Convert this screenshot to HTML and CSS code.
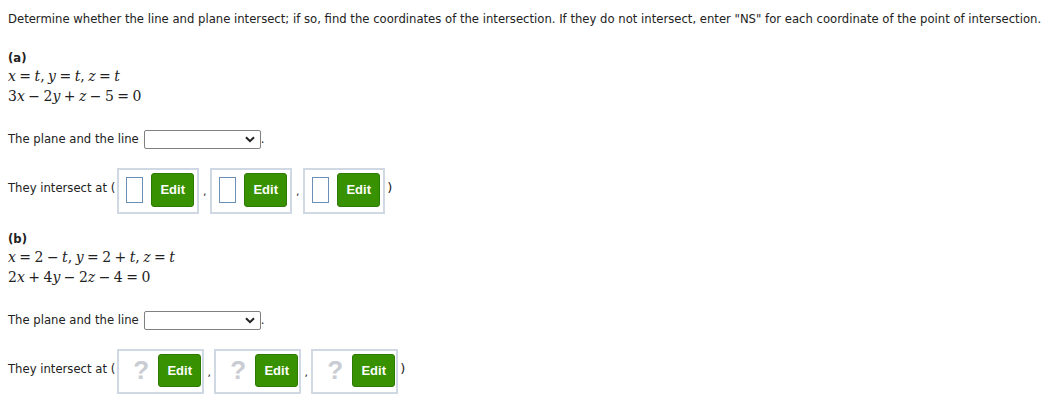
FILE: index.html
```html
<!DOCTYPE html>
<html>
<head>
<meta charset="utf-8">
<link rel="stylesheet" href="styles.css">
</head>
<body>
<div class="page">
  <p class="prompt">Determine whether the line and plane intersect; if so, find the coordinates of the intersection. If they do not intersect, enter "NS" for each coordinate of the point of intersection.</p>

  <section class="part part-a">
    <div class="label">(a)</div>
    <div class="eq"><i>x</i> = <i>t</i>, <i>y</i> = <i>t</i>, <i>z</i> = <i>t</i></div>
    <div class="eq">3<i>x</i> − 2<i>y</i> + <i>z</i> − 5 = 0</div>
    <div class="row plane">The plane and the line <span class="select"><svg width="10" height="7" viewBox="0 0 10 7"><path d="M1 1.2 L5 5.2 L9 1.2" fill="none" stroke="#222" stroke-width="2"/></svg></span>.</div>
    <div class="row meet">
      <span class="meet-label">They intersect at (</span>
      <span class="box"><span class="input"></span><span class="edit">Edit</span></span>
      <span class="sep">,</span>
      <span class="box"><span class="input"></span><span class="edit">Edit</span></span>
      <span class="sep">,</span>
      <span class="box"><span class="input"></span><span class="edit">Edit</span></span>
      <span class="close">)</span>
    </div>
  </section>

  <section class="part part-b">
    <div class="label">(b)</div>
    <div class="eq"><i>x</i> = 2 − <i>t</i>, <i>y</i> = 2 + <i>t</i>, <i>z</i> = <i>t</i></div>
    <div class="eq">2<i>x</i> + 4<i>y</i> − 2<i>z</i> − 4 = 0</div>
    <div class="row plane">The plane and the line <span class="select"><svg width="10" height="7" viewBox="0 0 10 7"><path d="M1 1.2 L5 5.2 L9 1.2" fill="none" stroke="#222" stroke-width="2"/></svg></span>.</div>
    <div class="row meet">
      <span class="meet-label">They intersect at (</span>
      <span class="box q"><span class="qmark">?</span><span class="edit">Edit</span></span>
      <span class="sep">,</span>
      <span class="box q"><span class="qmark">?</span><span class="edit">Edit</span></span>
      <span class="sep">,</span>
      <span class="box q"><span class="qmark">?</span><span class="edit">Edit</span></span>
      <span class="close">)</span>
    </div>
  </section>
</div>
</body>
</html>
```

FILE: styles.css
```css
html, body {
  margin: 0;
  padding: 0;
  background: #fff;
}
body {
  padding: 8px;
  font-family: "DejaVu Sans", Verdana, sans-serif;
  font-size: 11.65px;
  color: #222;
}
.prompt {
  margin: 3px 0 0 0;
  line-height: 16px;
  white-space: nowrap;
}
.part-a { margin-top: 23px; }
.part-b { margin-top: 17px; }
.label {
  font-weight: bold;
  line-height: 16px;
}
.eq {
  font-family: "DejaVu Serif", serif;
  font-size: 14px;
  line-height: 20px;
  color: #222;
  word-spacing: -1px;
}
.eq i { font-style: italic; }
.row {
  display: flex;
  align-items: center;
}
.plane {
  margin-top: 24px;
  height: 18px;
}
.select {
  display: inline-flex;
  align-items: center;
  justify-content: flex-end;
  box-sizing: border-box;
  width: 117px;
  height: 19px;
  margin-left: 5px;
  padding-right: 5px;
  border: 1px solid #808080;
  border-radius: 2px;
  background: #fff;
}
.meet {
  margin-top: 20px;
  align-items: flex-start;
}
.meet-label {
  margin-top: 12px;
  margin-right: 2px;
  line-height: 16px;
}
.sep, .close {
  margin-top: 16px;
  line-height: 16px;
  font-size: 11px;
}
.sep { width: 11px; text-align: center; }
.part-b .sep { width: 10px; }
.close { margin-left: 2px; font-size: 13px; margin-top: 12px; }
.box {
  display: flex;
  align-items: flex-start;
  box-sizing: border-box;
  width: 82px;
  height: 46px;
  border: 2px solid #cfd8e3;
  padding: 3px 0 0 7px;
  background: #fff;
}
.input {
  box-sizing: border-box;
  width: 17px;
  height: 26px;
  margin-top: 4px;
  border: 1px solid #6c8fb6;
  margin-right: 8px;
}
.edit {
  box-sizing: border-box;
  width: 43px;
  height: 34px;
  background: #379100;
  border: 1px solid #2d7a00;
  border-radius: 3px;
  color: #fff;
  font-family: "Liberation Sans", Arial, sans-serif;
  font-weight: bold;
  font-size: 13px;
  line-height: 32px;
  text-align: center;
}
.box.q {
  width: 87px;
  height: 45px;
  padding: 3px 0 0 14px;
}
.qmark {
  width: 25px;
  font-family: "Liberation Sans", Arial, sans-serif;
  font-weight: bold;
  font-size: 26px;
  line-height: 33px;
  color: #c9ccd3;
}
.box.q .edit { height: 33px; line-height: 31px; }
```
